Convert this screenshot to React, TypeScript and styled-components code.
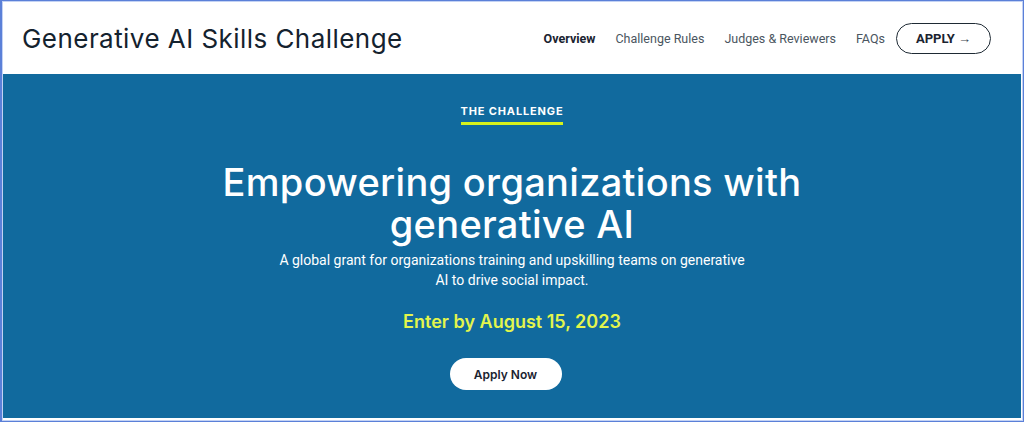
import styled, { createGlobalStyle } from "styled-components"

const GlobalStyle = createGlobalStyle`
  html, body {
    margin: 0;
    padding: 0;
    background: #ffffff;
  }
  body {
    font-family: "Inter", "Liberation Sans", sans-serif;
  }
`

const navLinks = [
  { label: "Overview", active: true },
  { label: "Challenge Rules", active: false },
  { label: "Judges & Reviewers", active: false },
  { label: "FAQs", active: false },
]

const App = () => {
  return (
    <>
      <GlobalStyle />
      <Frame>
        <Header>
          <Brand>Generative AI Skills Challenge</Brand>
          <Nav>
            {navLinks.map((link) => (
              <NavLink key={link.label} $active={link.active}>
                {link.label}
              </NavLink>
            ))}
            <ApplyButton>
              APPLY <Arrow>→</Arrow>
            </ApplyButton>
          </Nav>
        </Header>
        <Hero>
          <Eyebrow>THE CHALLENGE</Eyebrow>
          <Title>
            Empowering organizations with
            <br />
            generative AI
          </Title>
          <Lead>
            A global grant for organizations training and upskilling teams on generative AI to drive social impact.
          </Lead>
          <Deadline>Enter by August 15, 2023</Deadline>
          <PillButton>Apply Now</PillButton>
        </Hero>
      </Frame>
    </>
  )
}

export default App

const Frame = styled.div`
  box-sizing: border-box;
  width: 1024px;
  height: 422px;
  border: 1px solid #5b80d8;
  border-left-width: 2px;
  box-shadow: inset 0 0 0 1px #c3d2f4;
  padding: 1px 2px 3px 1px;
  display: flex;
  flex-direction: column;
  overflow: hidden;
`

const Header = styled.header`
  height: 72px;
  flex-shrink: 0;
  display: flex;
  align-items: center;
  justify-content: space-between;
  padding: 0 30px 0 19px;
  background: #ffffff;
`

const Brand = styled.div`
  font-family: "Inter", sans-serif;
  font-size: 26px;
  font-weight: 400;
  letter-spacing: 0.45px;
  color: #14222e;
`

const Nav = styled.nav`
  display: flex;
  align-items: center;
  gap: 20px;
`

const NavLink = styled.a<{ $active: boolean }>`
  font-family: "Roboto", sans-serif;
  font-size: 12.5px;
  font-weight: ${(p) => (p.$active ? 700 : 400)};
  color: ${(p) => (p.$active ? "#1a2330" : "#4a5560")};
  cursor: pointer;
`

const ApplyButton = styled.button`
  box-sizing: border-box;
  width: 95px;
  height: 31px;
  margin-left: -9px;
  border: 1.5px solid #1e2a34;
  border-radius: 16px;
  background: #ffffff;
  font-family: "Roboto", sans-serif;
  font-size: 13px;
  font-weight: 700;
  color: #1a2330;
  cursor: pointer;
`

const Arrow = styled.span`
  font-family: "Liberation Sans", sans-serif;
  font-weight: 400;
  color: #3a4550;
`

const Hero = styled.section`
  flex: 1;
  background: #116a9e;
  display: flex;
  flex-direction: column;
  align-items: center;
  padding-top: 30px;
  color: #ffffff;
  text-align: center;
`

const Eyebrow = styled.div`
  font-family: "Inter", sans-serif;
  font-size: 11px;
  font-weight: 700;
  letter-spacing: 0.85px;
  padding-bottom: 4px;
  border-bottom: 3px solid #d6f21c;
`

const Title = styled.h1`
  margin: 36px 0 0;
  font-family: "Inter", sans-serif;
  font-size: 38px;
  font-weight: 500;
  line-height: 42px;
  letter-spacing: 0.3px;
`

const Lead = styled.p`
  margin: 5px 0 0;
  width: 480px;
  font-family: "Roboto", sans-serif;
  font-size: 14px;
  line-height: 20px;
`

const Deadline = styled.div`
  margin-top: 21px;
  font-family: "Inter", sans-serif;
  font-size: 18px;
  font-weight: 600;
  color: #e3f54c;
`

const PillButton = styled.button`
  margin: 26px 13px 0 0;
  width: 112px;
  height: 32px;
  border: none;
  border-radius: 16px;
  background: #ffffff;
  font-family: "Inter", sans-serif;
  font-size: 12px;
  font-weight: 600;
  color: #1a2330;
  cursor: pointer;
`
